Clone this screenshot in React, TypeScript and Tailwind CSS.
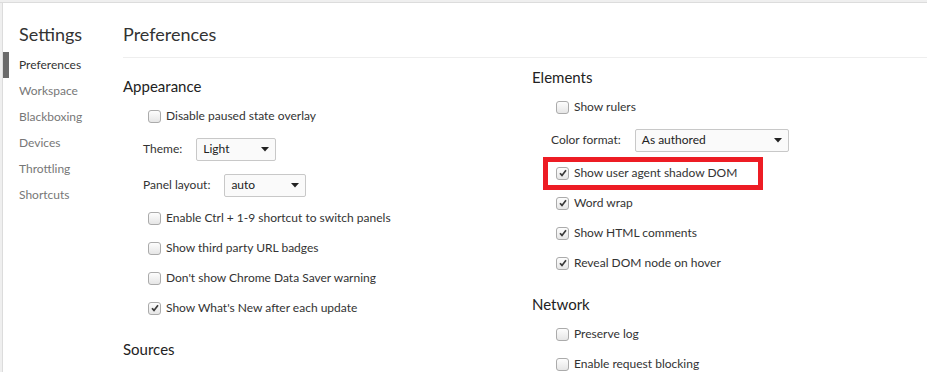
import React from 'react';

const font = { fontFamily: 'Lato, "Liberation Sans", sans-serif' };

function CheckBox({ checked }: { checked?: boolean }) {
  return (
    <span className="relative inline-flex h-[13px] w-[13px] shrink-0 items-center justify-center rounded-[3px] border border-[#ababab] bg-gradient-to-b from-[#fdfdfd] to-[#e6e6e6]">
      {checked && (
        <svg width="8" height="8" viewBox="0 0 8 8">
          <path d="M1 4.2 L3 6.4 L7 1.2" fill="none" stroke="#3a3a3a" strokeWidth="1.7" />
        </svg>
      )}
    </span>
  );
}

function CheckRow({ label, checked, indent }: { label: string; checked?: boolean; indent: string }) {
  return (
    <div className={`flex h-[30px] items-center ${indent}`}>
      <CheckBox checked={checked} />
      <span className="ml-[5px] text-[12px] text-[#333]">{label}</span>
    </div>
  );
}

function Select({ value, width }: { value: string; width: string }) {
  return (
    <div className={`flex h-[23px] items-center justify-between rounded-[2px] border border-[#c8c8c8] bg-[#fafafa] pl-[6px] pr-[6px] text-[12px] text-[#222] ${width}`}>
      <span>{value}</span>
      <svg width="8" height="5" viewBox="0 0 8 5">
        <path d="M0 0 L8 0 L4 4.5 Z" fill="#222" />
      </svg>
    </div>
  );
}

function SelectRow({ label, value, indent, width }: { label: string; value: string; indent: string; width: string }) {
  return (
    <div className={`flex h-[36px] items-center ${indent}`}>
      <span className="mr-[14px] text-[12px] text-[#333]">{label}</span>
      <Select value={value} width={width} />
    </div>
  );
}

function SectionTitle({ children }: { children: React.ReactNode }) {
  return <div className="flex h-[30px] items-center text-[15px] text-[#222]">{children}</div>;
}

const navItems = ['Preferences', 'Workspace', 'Blackboxing', 'Devices', 'Throttling', 'Shortcuts'];

export default function App() {
  return (
    <div className="h-[372px] w-[927px] overflow-hidden bg-white" style={font}>
      <div className="h-[3px] border-b border-[#dcdcdc] bg-[#efefef]" />
      <div className="flex h-[369px]">
        <div className="w-[3px] shrink-0 border-r border-[#dcdcdc] bg-[#efefef]" />

        <aside className="w-[120px] shrink-0">
          <div className="flex h-[49px] items-end pl-[16px] pb-[4px] text-[18px] text-[#333]">Settings</div>
          <ul>
            {navItems.map((item, i) => (
              <li key={item} className="flex h-[26px] items-center">
                <span className={`h-full w-[6px] ${i === 0 ? 'bg-[#6b6b6b]' : ''}`} />
                <span className={`pl-[10px] text-[12px] ${i === 0 ? 'text-[#333]' : 'text-[#777]'}`}>{item}</span>
              </li>
            ))}
          </ul>
        </aside>

        <main className="min-w-0 flex-1">
          <div className="flex h-[55px] items-end border-b border-[#eeeeee] pb-[9px] text-[18px] text-[#333]">Preferences</div>

          <div className="flex">
            <section className="mt-[13px] w-[409px] shrink-0">
              <SectionTitle>Appearance</SectionTitle>
              <CheckRow indent="pl-[25px]" label="Disable paused state overlay" />
              <SelectRow indent="pl-[20px]" label="Theme:" value="Light" width="w-[80px]" />
              <SelectRow indent="pl-[20px]" label="Panel layout:" value="auto" width="w-[82px]" />
              <CheckRow indent="pl-[25px]" label="Enable Ctrl + 1-9 shortcut to switch panels" />
              <CheckRow indent="pl-[25px]" label="Show third party URL badges" />
              <CheckRow indent="pl-[25px]" label="Don't show Chrome Data Saver warning" />
              <CheckRow indent="pl-[25px]" label="Show What's New after each update" checked />
              <div className="mt-[11px]">
                <SectionTitle>Sources</SectionTitle>
              </div>
            </section>

            <section className="mt-[4px] flex-1">
              <SectionTitle>Elements</SectionTitle>
              <CheckRow indent="pl-[24px]" label="Show rulers" />
              <SelectRow indent="pl-[19px]" label="Color format:" value="As authored" width="w-[154px]" />
              <div className="relative">
                <CheckRow indent="pl-[24px]" label="Show user agent shadow DOM" checked />
                <div className="pointer-events-none absolute left-[11px] top-[-1px] h-[33px] w-[220px] border-[5px] border-[#ed1c24]" />
              </div>
              <CheckRow indent="pl-[24px]" label="Word wrap" checked />
              <CheckRow indent="pl-[24px]" label="Show HTML comments" checked />
              <CheckRow indent="pl-[24px]" label="Reveal DOM node on hover" checked />
              <div className="mt-[11px]">
                <SectionTitle>Network</SectionTitle>
              </div>
              <CheckRow indent="pl-[24px]" label="Preserve log" />
              <CheckRow indent="pl-[24px]" label="Enable request blocking" />
            </section>
          </div>
        </main>
      </div>
    </div>
  );
}
